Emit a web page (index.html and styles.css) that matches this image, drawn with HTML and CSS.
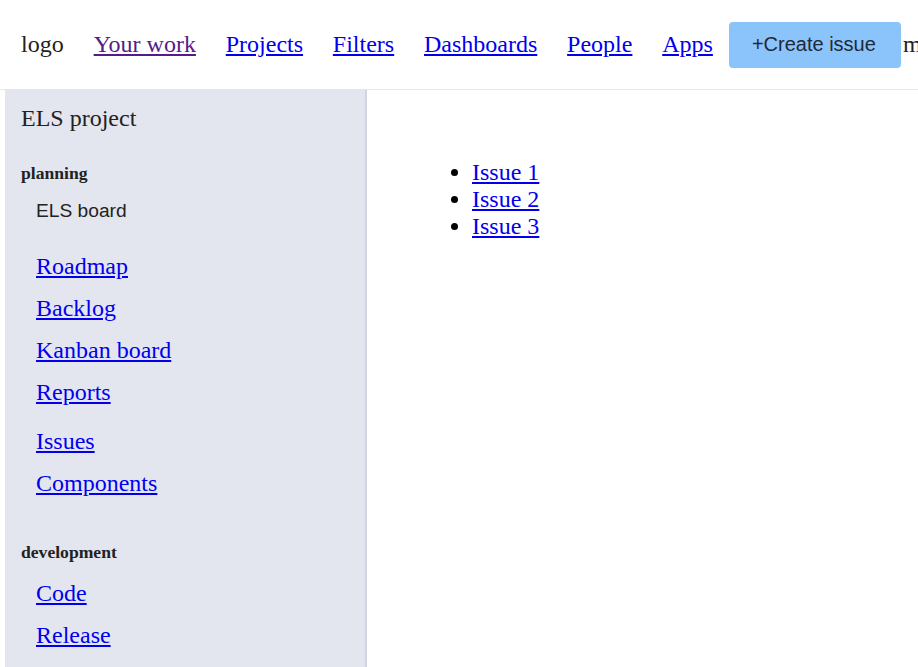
FILE: index.html
```html
<!DOCTYPE html>
<html>
<head>
<meta charset="utf-8">
<link rel="stylesheet" href="styles.css">
</head>
<body>
<header class="topbar">
  <span class="logo">logo</span>
  <nav class="topnav">
    <a href="#" class="visited">Your work</a>
    <a href="#">Projects</a>
    <a href="#">Filters</a>
    <a href="#">Dashboards</a>
    <a href="#">People</a>
    <a href="#">Apps</a>
  </nav>
  <button class="create">+Create issue</button>
  <span class="more">my profile</span>
</header>
<div class="layout">
  <aside class="sidebar">
    <div class="proj">ELS project</div>
    <div class="sect sect-planning">planning</div>
    <div class="board">ELS board</div>
    <div class="links links-a">
      <a href="#">Roadmap</a>
      <a href="#">Backlog</a>
      <a href="#">Kanban board</a>
      <a href="#">Reports</a>
    </div>
    <div class="links links-b">
      <a href="#">Issues</a>
      <a href="#">Components</a>
    </div>
    <div class="sect sect-dev">development</div>
    <div class="links links-c">
      <a href="#">Code</a>
      <a href="#">Release</a>
    </div>
  </aside>
  <main class="main">
    <ul class="issues">
      <li><a href="#">Issue 1</a></li>
      <li><a href="#">Issue 2</a></li>
      <li><a href="#">Issue 3</a></li>
    </ul>
  </main>
</div>
</body>
</html>
```
FILE: styles.css
```css
html, body {
  margin: 0;
  padding: 0;
  overflow: hidden;
}
body {
  font-family: "Liberation Serif", "Times New Roman", serif;
  font-size: 24px;
  color: #000;
  background: #fff;
  width: 918px;
  height: 667px;
}
a { color: #0000ee; }
a.visited { color: #551a8b; }

.topbar {
  display: flex;
  align-items: center;
  height: 89px;
  border-bottom: 1px solid #e5e7eb;
  padding-left: 21px;
  white-space: nowrap;
  box-sizing: content-box;
}
.logo { color: #222; margin-right: 30px; }
.topnav {
  display: flex;
  gap: 29.8px;
}
.create {
  margin-left: 16px;
  width: 172px;
  height: 46px;
  background: #8bc3fb;
  border: none;
  border-radius: 4px;
  font-family: "Liberation Sans", Arial, sans-serif;
  font-size: 20px;
  color: #1f2937;
  padding: 0 2px 0 0;
  flex-shrink: 0;
}
.more { margin-left: 2px; color: #222; }

.layout {
  display: flex;
  height: 577px;
}
.sidebar {
  margin-left: 5px;
  width: 362px;
  background: #e3e6ee;
  border-right: 2px solid #cfd5e2;
  padding: 14px 0 0 16px;
  box-sizing: border-box;
  display: flex;
  flex-direction: column;
  color: #222;
}
.proj {
  font-size: 24px;
  line-height: 28px;
}
.sect {
  font-weight: bold;
  font-size: 17.6px;
  line-height: 20px;
}
.sect-planning { margin-top: 31px; }
.board {
  margin-top: 17px;
  margin-left: 15px;
  font-family: "Liberation Sans", Arial, sans-serif;
  font-size: 19.2px;
  line-height: 22px;
}
.links {
  display: flex;
  flex-direction: column;
  gap: 14px;
  margin-left: 15px;
  align-items: flex-start;
}
.links a { line-height: 28px; }
.links-a { margin-top: 30px; }
.links-b { margin-top: 21px; }
.sect-dev { margin-top: 45px; }
.links-c { margin-top: 17px; }

.main {
  flex: 1;
  padding-top: 69px;
}
.issues {
  margin: 0;
  padding-left: 105px;
  line-height: 27px;
}
```
